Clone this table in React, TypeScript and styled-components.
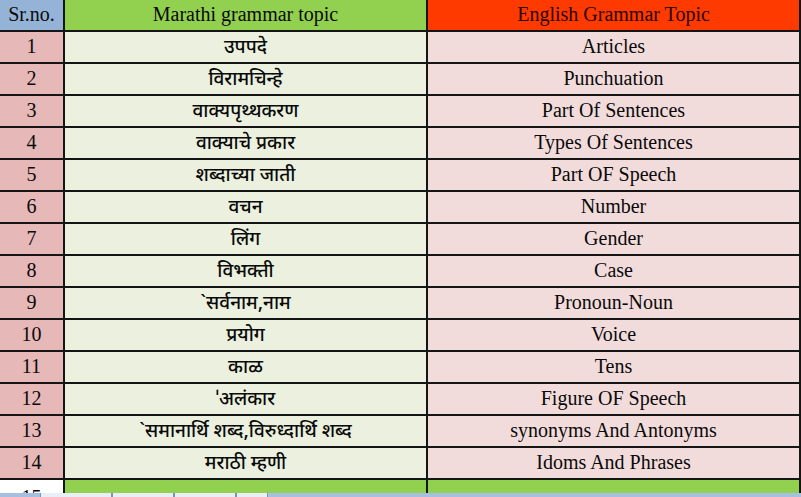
import React from "react";
import styled, {createGlobalStyle} from "styled-components";

const GlobalStyle = createGlobalStyle`
  html, body {
    margin: 0;
    padding: 0;
    background: #ffffff;
    overflow: hidden;
  }
`;

const Page = styled.div`
  width: 801px;
  height: 497px;
  display: flex;
  flex-direction: column;
  overflow: hidden;
`;

const Sheet = styled.div`
  flex: 1;
  overflow: hidden;
  display: flex;
  flex-direction: column;
`;

const Row = styled.div<{$h?: number}>`
  display: grid;
  grid-template-columns: 65px 363px 373px;
  height: ${(p) => p.$h || 32}px;
  flex-shrink: 0;
`;

const Cell = styled.div<{$bg: string; $color?: string; $deva?: boolean}>`
  box-sizing: border-box;
  display: flex;
  align-items: center;
  justify-content: center;
  background: ${(p) => p.$bg};
  color: ${(p) => p.$color || "#0a0a0a"};
  border-bottom: 2px solid #151515;
  border-right: 2px solid #151515;
  font-family: ${(p) =>
    p.$deva
      ? `"Noto Sans Devanagari", "Lohit Devanagari", "Noto Sans", sans-serif`
      : `"Liberation Serif", "Times New Roman", serif`};
  font-size: ${(p) => (p.$deva ? "19px" : "20px")};
  font-weight: ${(p) => (p.$deva ? 500 : 400)};
  line-height: 20px;
  padding-top: ${(p) => (p.$deva ? "4px" : "0")};
  padding-bottom: ${(p) => (p.$deva ? "0" : "2px")};
  white-space: nowrap;
  overflow: hidden;
`;

// the half-visible row under the table, cut off by the sheet tabs
const TailCell = styled.div<{$bg: string}>`
  box-sizing: border-box;
  background: ${(p) => p.$bg};
  border-right: 2px solid #151515;
  font-family: "Liberation Serif", "Times New Roman", serif;
  font-size: 20px;
  line-height: 34px;
  text-align: center;
  overflow: hidden;
  color: #0a0a0a;
`;

const TabBar = styled.div`
  height: 4px;
  background: #a7c0e2;
  display: flex;
  padding-left: 40px;
  flex-shrink: 0;
`;

const Tab = styled.div<{$w: number}>`
  width: ${(p) => p.$w}px;
  height: 4px;
  background: #e9eef7;
  border-left: 1px solid #7e93b4;
  border-right: 1px solid #7e93b4;
`;

const rows: [string, string][] = [
  ["उपपदे", "Articles"],
  ["विरामचिन्हे", "Punchuation"],
  ["वाक्यपृथ्थकरण", "Part Of Sentences"],
  ["वाक्याचे प्रकार", "Types Of Sentences"],
  ["शब्दाच्या जाती", "Part OF Speech"],
  ["वचन", "Number"],
  ["लिंग", "Gender"],
  ["विभक्ती", "Case"],
  ["ˋसर्वनाम,नाम", "Pronoun-Noun"],
  ["प्रयोग", "Voice"],
  ["काळ", "Tens"],
  ["ˈअलंकार", "Figure OF Speech"],
  ["ˋसमानार्थि शब्द,विरुध्दार्थि शब्द", "synonyms And Antonyms"],
  ["मराठी म्हणी", "Idoms And Phrases"],
];

const App = () => {
  return (
    <Page>
      <GlobalStyle />
      <Sheet>
        <Row>
          <Cell $bg="#95b3d7">Sr.no.</Cell>
          <Cell $bg="#92d050">Marathi grammar topic</Cell>
          <Cell $bg="#ff3a00" $color="#2a0500">
            English Grammar Topic
          </Cell>
        </Row>
        {rows.map(([mr, en], i) => (
          <Row key={i}>
            <Cell $bg="#e6b8b7">{i + 1}</Cell>
            <Cell $bg="#ebf1de" $deva>
              {mr}
            </Cell>
            <Cell $bg="#f2dcdb">{en}</Cell>
          </Row>
        ))}
        <Row $h={13}>
          <TailCell $bg="#ffffff">15</TailCell>
          <TailCell $bg="#92d050" />
          <TailCell $bg="#92d050" />
        </Row>
      </Sheet>
      <TabBar>
        <Tab $w={70} />
        <Tab $w={60} />
        <Tab $w={60} />
        <Tab $w={30} />
      </TabBar>
    </Page>
  );
};

export default App;
